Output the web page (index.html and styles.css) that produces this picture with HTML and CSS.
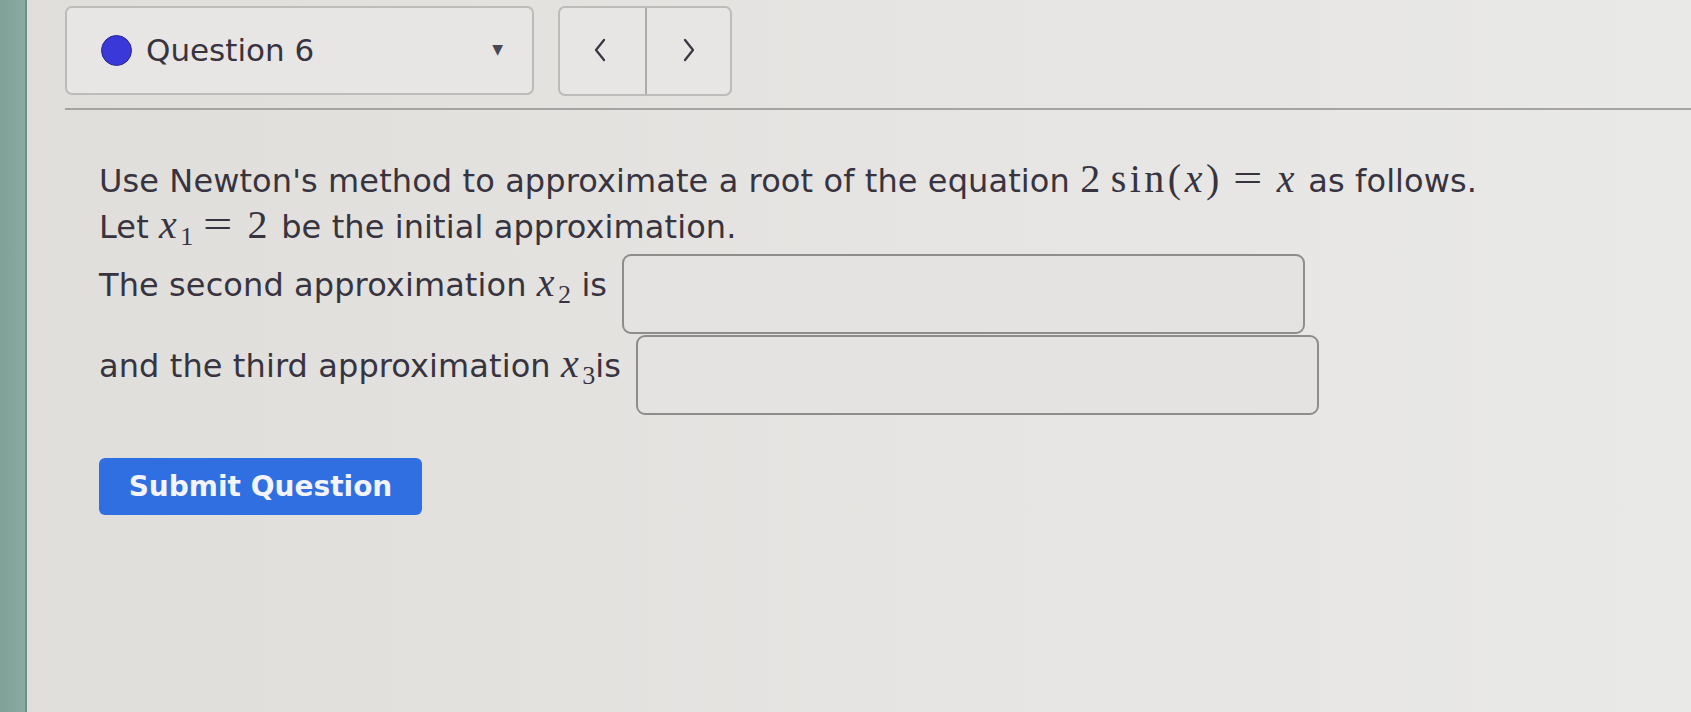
FILE: index.html
```html
<!DOCTYPE html>
<html lang="en">
<head>
    <meta charset="UTF-8">
    <meta name="viewport" content="width=device-width, initial-scale=1.0">
    <title>Question 6</title>
    <link rel="stylesheet" href="styles.css">
</head>
<body>
    <div class="sidebar"></div>

    <div class="page">
        <div class="question-bar">
            <div class="question-select">
                <span class="status-dot"></span>
                <span class="question-name">Question 6</span>
                <span class="caret">&#9660;</span>
            </div>
            <div class="question-nav">
                <button class="nav-btn" aria-label="Previous question">
                    <svg width="14" height="24" viewBox="0 0 14 24"><path d="M11 2 L3 12 L11 22" fill="none" stroke="#3b3742" stroke-width="2.3" stroke-linecap="round" stroke-linejoin="round"/></svg>
                </button>
                <button class="nav-btn" aria-label="Next question">
                    <svg width="14" height="24" viewBox="0 0 14 24"><path d="M3 2 L11 12 L3 22" fill="none" stroke="#3b3742" stroke-width="2.3" stroke-linecap="round" stroke-linejoin="round"/></svg>
                </button>
            </div>
        </div>

        <div class="question">
            <p class="intro">
                Use Newton's method to approximate a root of the equation
                <span class="math"><span class="mn">2</span><span class="mfn">sin</span><span class="mo">(</span><span class="mi">x</span><span class="mo">)</span><span class="mrel">=</span><span class="mi">x</span></span>
                as follows.<br>
                Let <span class="math"><span class="mi">x</span><sub class="msub">1</sub><span class="mrel">=</span><span class="mn">2</span></span> be the initial approximation.
            </p>

            <div class="answer-row">
                <label for="x2">The second approximation <span class="math"><span class="mi">x</span><sub class="msub">2</sub></span> is</label>
                <input type="text" id="x2" class="answer">
            </div>
            <div class="answer-row">
                <label for="x3">and the third approximation <span class="math"><span class="mi">x</span><sub class="msub">3</sub></span>is</label>
                <input type="text" id="x3" class="answer">
            </div>

            <button class="submit">Submit Question</button>
        </div>
    </div>
</body>
</html>
```

FILE: styles.css
```css
body {
    margin: 0;
    padding: 0;
    display: flex;
    height: 712px;
    overflow: hidden;
    font-family: "DejaVu Sans", sans-serif;
    color: #38343f;
    background: linear-gradient(to right, #dfdedb, #e6e5e3 60%, #e9e9e7);
}

.sidebar {
    width: 25px;
    flex-shrink: 0;
    background: linear-gradient(to right, #7fa198, #8aaaa2);
    border-right: 2px solid #6f8f88;
}

.page {
    flex: 1;
    padding: 6px 0 0 38px;
}

/* top bar: question picker + prev/next */
.question-bar {
    display: flex;
    gap: 24px;
    padding-bottom: 12px;
    border-bottom: 2px solid #a6a4a2;
}

.question-select {
    width: 469px;
    height: 89px;
    box-sizing: border-box;
    display: flex;
    align-items: center;
    padding: 0 29px 0 34px;
    border: 2px solid #bebcba;
    border-radius: 7px;
    background-color: #e7e6e4;
}

.status-dot {
    width: 31px;
    height: 31px;
    border-radius: 50%;
    background-color: #3a38d8;
    border: 1px solid #2a2890;
    box-sizing: border-box;
    margin-right: 14px;
}

.question-name {
    font-size: 31px;
    flex: 1;
    position: relative;
    top: -1px;
}

.caret {
    font-size: 14px;
    color: #4a4752;
    position: relative;
    top: -2px;
}

.question-nav {
    display: flex;
    height: 90px;
    box-sizing: border-box;
    border: 2px solid #bebcba;
    border-radius: 7px;
    background-color: #e7e6e4;
}

.nav-btn {
    width: 85px;
    border: none;
    background: none;
    padding: 0 0 2px;
    display: flex;
    align-items: center;
    justify-content: center;
}

.nav-btn:first-child {
    padding-right: 6px;
}

.nav-btn + .nav-btn {
    border-left: 2px solid #aeacaa;
}

/* question body */
.question {
    padding: 47px 0 0 34px;
    font-size: 32px;
    letter-spacing: 0.1px;
}

.intro {
    margin: 0;
    line-height: 43px;
}

.math {
    font-family: "Liberation Serif", serif;
    font-size: 40px;
    letter-spacing: 3.5px;
    white-space: nowrap;
}

.mi {
    font-style: italic;
}

.mfn {
    margin-left: 7px;
}

.mrel {
    display: inline-block;
    margin: 0 14px;
    transform: scaleX(1.3);
}

.msub {
    font-size: 26px;
    vertical-align: -7px;
    line-height: 0;
    letter-spacing: 0;
}

.answer-row {
    display: flex;
    align-items: flex-start;
    margin-top: 1px;
}

.answer-row:first-of-type {
    margin-top: 5px;
}

.answer-row label {
    margin-top: 4px;
    line-height: 49px;
    margin-right: 15px;
}

.answer {
    width: 683px;
    height: 80px;
    box-sizing: border-box;
    border: 2px solid #8f8d8b;
    border-radius: 9px;
    background-color: #e4e3e1;
}

.submit {
    margin-top: 43px;
    width: 323px;
    height: 57px;
    border: none;
    border-radius: 6px;
    background-color: #2f6fe2;
    color: #f3f3fb;
    font-family: "DejaVu Sans", sans-serif;
    font-size: 28px;
    font-weight: bold;
    cursor: pointer;
}
```
